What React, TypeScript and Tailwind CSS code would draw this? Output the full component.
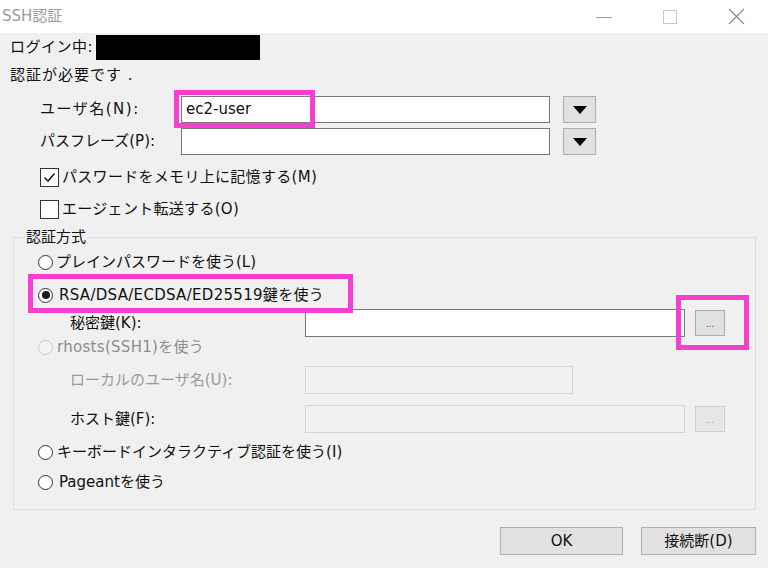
import React from "react";

function Radio({ checked = false, disabled = false }: { checked?: boolean; disabled?: boolean }) {
  return (
    <span
      className={
        "flex h-[15px] w-[15px] shrink-0 items-center justify-center rounded-full border " +
        (disabled ? "border-[#c6c6c6] bg-[#f4f4f4]" : "border-[#333] bg-white")
      }
    >
      {checked && <span className="h-[8px] w-[8px] rounded-full bg-[#1a1a1a]" />}
    </span>
  );
}

function Check({ checked = false }: { checked?: boolean }) {
  return (
    <span className="flex h-[19px] w-[19px] shrink-0 items-center justify-center border border-[#333] bg-white">
      {checked && (
        <svg width="15" height="15" viewBox="0 0 15 15">
          <path d="M2.5 7.5 L6 11 L12.5 3.5" fill="none" stroke="#222" strokeWidth="1.6" />
        </svg>
      )}
    </span>
  );
}

function Drop() {
  return (
    <div className="flex h-[27px] w-[33px] items-center justify-center border border-[#adadad] bg-[#e1e1e1]">
      <svg width="14" height="8" viewBox="0 0 14 8">
        <path d="M0 0 H14 L7 8 Z" fill="#000" />
      </svg>
    </div>
  );
}

function Dots({ disabled = false }: { disabled?: boolean }) {
  return (
    <div
      className={
        "ml-[10px] flex h-[26px] w-[30px] items-end justify-center border pb-[6px] text-[9px] leading-none " +
        (disabled ? "border-[#cfcfcf] bg-[#e6e6e6] text-[#a0a0a0]" : "border-[#adadad] bg-[#e1e1e1] text-[#333]")
      }
    >
      ...
    </div>
  );
}

export default function App() {
  return (
    <div className="relative h-[568px] w-[768px] overflow-hidden bg-[#f0f0f0] font-['DejaVu_Sans','Noto_Sans_CJK_JP',sans-serif] text-[15px] text-[#111]">
      {/* Title bar */}
      <div className="flex h-[33px] items-center justify-between bg-white">
        <span className="pl-[2px] text-[15px] text-[#9a9a9a]">SSH認証</span>
        <div className="flex items-center">
          <svg width="18" height="18" viewBox="0 0 18 18" className="mr-[49px]">
            <path d="M1 9.5 H17" stroke="#9a9a9a" strokeWidth="1" />
          </svg>
          <svg width="16" height="16" viewBox="0 0 16 16" className="mr-[50px]">
            <rect x="1.5" y="1.5" width="13" height="13" fill="none" stroke="#c8c8c8" strokeWidth="1" />
          </svg>
          <svg width="17" height="17" viewBox="0 0 17 17" className="mr-[23px]">
            <path d="M1 1 L16 16 M16 1 L1 16" stroke="#8a8a8a" strokeWidth="1.2" />
          </svg>
        </div>
      </div>

      {/* Login info */}
      <div className="mt-[2px] flex h-[25px] items-center pl-[10px]">
        <span className="tracking-[0.5px]">ログイン中:</span>
        <span className="ml-[3px] h-[25px] w-[164px] bg-black" />
      </div>
      <div className="mt-[4px] flex h-[22px] items-center pl-[10px] tracking-[1px]">認証が必要です .</div>

      {/* User name */}
      <div className="mt-[10px] flex h-[27px] items-center pl-[40px]">
        <span className="w-[141px] tracking-[1.5px]">ユーザ名(N):</span>
        <div className="flex h-[27px] w-[369px] items-center border border-[#7a7a7a] bg-white pl-[4px]">ec2-user</div>
        <div className="ml-[13px]">
          <Drop />
        </div>
      </div>
      <div className="mt-[5px] flex h-[27px] items-center pl-[40px]">
        <span className="w-[141px]">パスフレーズ(P):</span>
        <div className="h-[27px] w-[369px] border border-[#7a7a7a] bg-white" />
        <div className="ml-[13px]">
          <Drop />
        </div>
      </div>

      {/* Checkboxes */}
      <div className="mt-[12px] flex h-[20px] items-center gap-[3px] pl-[40px]">
        <Check checked />
        <span className="tracking-[0.3px]">パスワードをメモリ上に記憶する(M)</span>
      </div>
      <div className="mt-[12px] flex h-[20px] items-center gap-[3px] pl-[40px]">
        <Check />
        <span className="tracking-[0.3px]">エージェント転送する(O)</span>
      </div>

      {/* Auth method group */}
      <fieldset className="ml-[13px] mt-[8px] w-[743px] border border-[#dcdcdc] pb-[17px]">
        <legend className="ml-[11px] h-[20px] px-[1px] leading-[20px]">認証方式</legend>

        <div className="pl-[24px]">
          <div className="mt-[5px] flex h-[20px] items-center gap-[3px]">
            <Radio />
            <span>プレインパスワードを使う(L)</span>
          </div>
          <div className="mt-[13px] flex h-[20px] items-center gap-[6px]">
            <Radio checked />
            <span className="tracking-[0.3px]">RSA/DSA/ECDSA/ED25519鍵を使う</span>
          </div>
          <div className="mt-[4px] flex h-[28px] items-center pl-[32px]">
            <span className="w-[235px]">秘密鍵(K):</span>
            <div className="h-[28px] w-[380px] border border-[#7a7a7a] bg-white" />
            <Dots />
          </div>
          <div className="flex h-[20px] items-center gap-[4px] text-[#8c8c8c]">
            <Radio disabled />
            <span className="tracking-[0.3px]">rhosts(SSH1)を使う</span>
          </div>
          <div className="mt-[9px] flex h-[28px] items-center pl-[32px]">
            <span className="w-[235px] text-[#9a9a9a]">ローカルのユーザ名(U):</span>
            <div className="h-[28px] w-[268px] border border-[#d4d4d4] bg-[#f0f0f0]" />
          </div>
          <div className="mt-[11px] flex h-[28px] items-center pl-[32px]">
            <span className="w-[235px]">ホスト鍵(F):</span>
            <div className="h-[28px] w-[380px] border border-[#d4d4d4] bg-[#f0f0f0]" />
            <Dots disabled />
          </div>
          <div className="mt-[9px] flex h-[20px] items-center gap-[4px]">
            <Radio />
            <span>キーボードインタラクティブ認証を使う(I)</span>
          </div>
          <div className="mt-[10px] flex h-[20px] items-center gap-[6px]">
            <Radio />
            <span>Pageantを使う</span>
          </div>
        </div>
      </fieldset>

      {/* Buttons */}
      <div className="mt-[17px] flex justify-end gap-[18px] pr-[12px]">
        <button className="h-[28px] w-[123px] border border-[#adadad] bg-[#e1e1e1] text-[15px]">OK</button>
        <button className="h-[28px] w-[115px] border border-[#adadad] bg-[#e1e1e1] text-[15px]">接続断(D)</button>
      </div>

      {/* Annotation boxes */}
      <div className="absolute left-[174px] top-[90px] h-[38px] w-[141px] border-[5px] border-[#f43fd1]" />
      <div className="absolute left-[28px] top-[274px] h-[39px] w-[325px] border-[5px] border-[#f43fd1]" />
      <div className="absolute left-[676px] top-[295px] h-[55px] w-[73px] border-[5px] border-[#f43fd1]" />
    </div>
  );
}
